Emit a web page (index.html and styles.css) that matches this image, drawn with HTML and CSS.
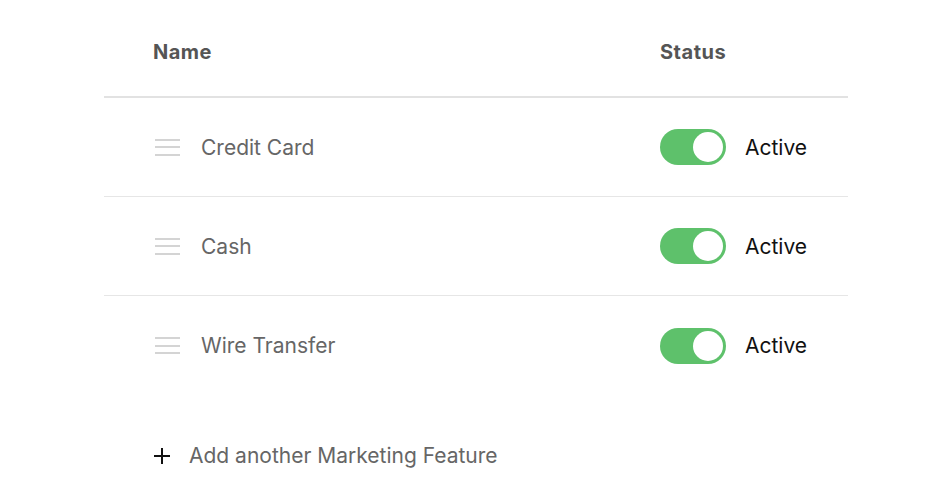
FILE: index.html
```html
<!DOCTYPE html>
<html lang="en">
<head>
    <meta charset="UTF-8">
    <title>Payment Methods</title>
    <link rel="stylesheet" href="styles.css">
</head>
<body>
    <div class="table">
        <div class="row head">
            <div class="col-name">Name</div>
            <div class="col-status">Status</div>
        </div>

        <div class="row item">
            <div class="col-name">
                <span class="handle"><i></i><i></i><i></i></span>
                <span>Credit Card</span>
            </div>
            <div class="col-status">
                <span class="toggle on"><span class="knob"></span></span>
                <span class="status-label">Active</span>
            </div>
        </div>

        <div class="row item">
            <div class="col-name">
                <span class="handle"><i></i><i></i><i></i></span>
                <span>Cash</span>
            </div>
            <div class="col-status">
                <span class="toggle on"><span class="knob"></span></span>
                <span class="status-label">Active</span>
            </div>
        </div>

        <div class="row item last">
            <div class="col-name">
                <span class="handle"><i></i><i></i><i></i></span>
                <span>Wire Transfer</span>
            </div>
            <div class="col-status">
                <span class="toggle on"><span class="knob"></span></span>
                <span class="status-label">Active</span>
            </div>
        </div>

        <div class="add-row">
            <svg class="plus" width="18" height="18" viewBox="0 0 18 18">
                <path d="M9 1v16M1 9h16" stroke="#111" stroke-width="2" fill="none"/>
            </svg>
            <span>Add another Marketing Feature</span>
        </div>
    </div>
</body>
</html>
```

FILE: styles.css
```css
body {
    margin: 0;
    background: #fff;
    font-family: Inter, "Noto Sans", sans-serif;
}

.table {
    width: 744px;
    margin-left: 104px;
}

.row {
    display: grid;
    grid-template-columns: 556px 1fr;
    align-items: center;
}

.col-name {
    padding-left: 49px;
    display: flex;
    align-items: center;
}

.head {
    height: 98px;
    box-sizing: border-box;
    padding-top: 7px;
    border-bottom: 2px solid #e2e2e2;
    font-size: 20px;
    letter-spacing: 0.5px;
    font-weight: 700;
    color: #555;
}

.item {
    height: 99px;
    border-bottom: 1px solid #e6e6e6;
    box-sizing: border-box;
    font-size: 21px;
    color: #666;
}

.item.last {
    border-bottom: none;
}

.handle {
    display: flex;
    flex-direction: column;
    gap: 5.5px;
    width: 25px;
    margin-right: 21px;
    margin-left: 2px;
}

.handle i {
    display: block;
    height: 2px;
    background: #d4d4d4;
}

.col-status {
    display: flex;
    align-items: center;
}

.toggle {
    position: relative;
    width: 66px;
    height: 36px;
    border-radius: 18px;
    background: #5ec16b;
    margin-right: 19px;
}

.knob {
    position: absolute;
    top: 3px;
    right: 3px;
    width: 30px;
    height: 30px;
    border-radius: 50%;
    background: #fff;
}

.status-label {
    color: #111;
    font-size: 21px;
}

.add-row {
    display: flex;
    align-items: center;
    margin-top: 48px;
    padding-left: 49px;
    font-size: 21px;
    color: #666;
}

.plus {
    margin-right: 18px;
}
```
